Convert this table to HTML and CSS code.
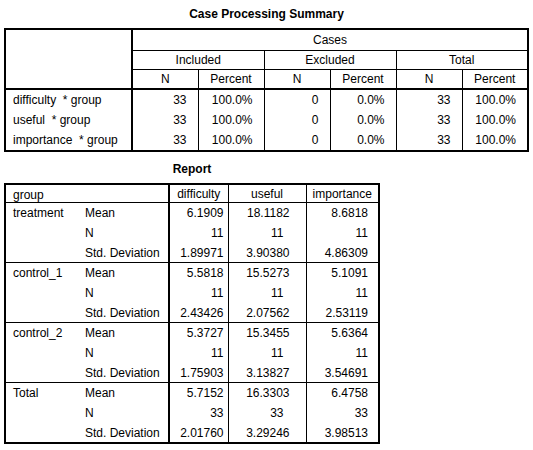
FILE: index.html
```html
<!DOCTYPE html>
<html lang="en">
<head>
    <meta charset="UTF-8">
    <meta name="viewport" content="width=device-width, initial-scale=1.0">
    <title>Output</title>
    <link rel="stylesheet" href="styles.css">
</head>
<body>
    <table class="pivot summary">
        <caption class="first">Case Processing Summary</caption>
        <colgroup>
            <col class="c-label">
            <col class="c-num"><col class="c-num">
            <col class="c-num"><col class="c-num">
            <col class="c-num"><col class="c-num">
        </colgroup>
        <thead>
            <tr class="row-cases">
                <th rowspan="3" class="corner"></th>
                <th colspan="6">Cases</th>
            </tr>
            <tr class="row-sub">
                <th colspan="2">Included</th>
                <th colspan="2">Excluded</th>
                <th colspan="2">Total</th>
            </tr>
            <tr class="row-sub last-head">
                <th>N</th><th>Percent</th>
                <th>N</th><th>Percent</th>
                <th>N</th><th>Percent</th>
            </tr>
        </thead>
        <tbody>
            <tr>
                <td class="label">difficulty&nbsp; * group</td>
                <td>33</td><td>100.0%</td><td>0</td><td>0.0%</td><td>33</td><td>100.0%</td>
            </tr>
            <tr>
                <td class="label">useful&nbsp; * group</td>
                <td>33</td><td>100.0%</td><td>0</td><td>0.0%</td><td>33</td><td>100.0%</td>
            </tr>
            <tr>
                <td class="label">importance&nbsp; * group</td>
                <td>33</td><td>100.0%</td><td>0</td><td>0.0%</td><td>33</td><td>100.0%</td>
            </tr>
        </tbody>
    </table>

    <table class="pivot report">
        <caption>Report</caption>
        <colgroup>
            <col class="c-group">
            <col class="c-stat">
            <col class="c-diff">
            <col class="c-useful">
            <col class="c-imp">
        </colgroup>
        <thead>
            <tr>
                <th colspan="2" class="group-head">group</th>
                <th>difficulty</th>
                <th>useful</th>
                <th>importance</th>
            </tr>
        </thead>
        <tbody>
            <tr><td rowspan="3" class="grp">treatment</td><td class="stat">Mean</td><td class="diff">6.1909</td><td class="useful">18.1182</td><td class="imp">8.6818</td></tr>
            <tr><td class="stat">N</td><td class="diff">11</td><td class="useful n">11</td><td class="imp">11</td></tr>
            <tr><td class="stat">Std. Deviation</td><td class="diff">1.89971</td><td class="useful">3.90380</td><td class="imp">4.86309</td></tr>
        </tbody>
        <tbody>
            <tr><td rowspan="3" class="grp">control_1</td><td class="stat">Mean</td><td class="diff">5.5818</td><td class="useful">15.5273</td><td class="imp">5.1091</td></tr>
            <tr><td class="stat">N</td><td class="diff">11</td><td class="useful n">11</td><td class="imp">11</td></tr>
            <tr><td class="stat">Std. Deviation</td><td class="diff">2.43426</td><td class="useful">2.07562</td><td class="imp">2.53119</td></tr>
        </tbody>
        <tbody>
            <tr><td rowspan="3" class="grp">control_2</td><td class="stat">Mean</td><td class="diff">5.3727</td><td class="useful">15.3455</td><td class="imp">5.6364</td></tr>
            <tr><td class="stat">N</td><td class="diff">11</td><td class="useful n">11</td><td class="imp">11</td></tr>
            <tr><td class="stat">Std. Deviation</td><td class="diff">1.75903</td><td class="useful">3.13827</td><td class="imp">3.54691</td></tr>
        </tbody>
        <tbody>
            <tr><td rowspan="3" class="grp">Total</td><td class="stat">Mean</td><td class="diff">5.7152</td><td class="useful">16.3303</td><td class="imp">6.4758</td></tr>
            <tr><td class="stat">N</td><td class="diff">33</td><td class="useful n">33</td><td class="imp">33</td></tr>
            <tr><td class="stat">Std. Deviation</td><td class="diff">2.01760</td><td class="useful">3.29246</td><td class="imp">3.98513</td></tr>
        </tbody>
    </table>
</body>
</html>
```

FILE: styles.css
```css
body {
    margin: 0;
    padding: 0 4px;
    font-family: "Liberation Sans", Arial, sans-serif;
    font-size: 12px;
    color: #000;
    background-color: #fff;
}
.pivot {
    border-collapse: collapse;
    table-layout: fixed;
    border: 2px solid #000;
}
.pivot caption {
    font-weight: bold;
    text-align: center;
    line-height: 16px;
    padding: 9px 0 6px;
}
.pivot caption.first {
    padding: 6px 0 6px;
}
.pivot th,
.pivot td {
    padding: 0;
    font-weight: normal;
    white-space: nowrap;
    overflow: hidden;
    border: 1px solid #000;
}

/* Case Processing Summary */
.summary {
    width: 524px;
}
.summary .c-label {
    width: 127px;
}
.summary .c-num {
    width: 66px;
}
.summary th {
    text-align: center;
    line-height: 18px;
}
.summary .row-cases th {
    height: 20px;
}
.summary .row-sub th {
    height: 18px;
}
.summary .corner {
    border-right: 2px solid #000;
    border-bottom: 2px solid #000;
}
.summary .last-head th {
    border-bottom: 2px solid #000;
}
.summary td {
    border-top: none;
    border-bottom: none;
    text-align: right;
    padding-right: 11px;
    height: 20px;
    line-height: 19px;
}
.summary td.label {
    text-align: left;
    padding: 0 0 0 7px;
    border-right: 2px solid #000;
}

/* Report */
.report {
    width: 374px;
}
.report .c-group {
    width: 72px;
}
.report .c-stat {
    width: 92px;
}
.report .c-diff {
    width: 59px;
}
.report .c-useful {
    width: 78px;
}
.report .c-imp {
    width: 73px;
}
.report th {
    text-align: center;
    height: 17px;
    line-height: 16px;
    padding-top: 0;
}
.report th.group-head {
    text-align: left;
    vertical-align: bottom;
    padding-left: 7px;
    line-height: 14px;
    border-right: 2px solid #000;
}
.report td {
    border-top: none;
    border-bottom: none;
    text-align: right;
    height: 18px;
    line-height: 18px;
    padding-top: 2px;
}
.report tbody tr:first-child td {
    border-top: 1px solid #000;
    height: 18px;
    padding-top: 1px;
}
.report td.grp {
    text-align: left;
    vertical-align: top;
    padding-left: 7px;
    border-right: none;
}
.report td.stat {
    text-align: left;
    padding-left: 8px;
    border-left: none;
    border-right: 2px solid #000;
}
.report td.diff {
    padding-right: 4px;
}
.report td.useful {
    padding-right: 16px;
}
.report td.useful.n {
    padding-right: 22px;
}
.report td.imp {
    padding-right: 10px;
}
```
